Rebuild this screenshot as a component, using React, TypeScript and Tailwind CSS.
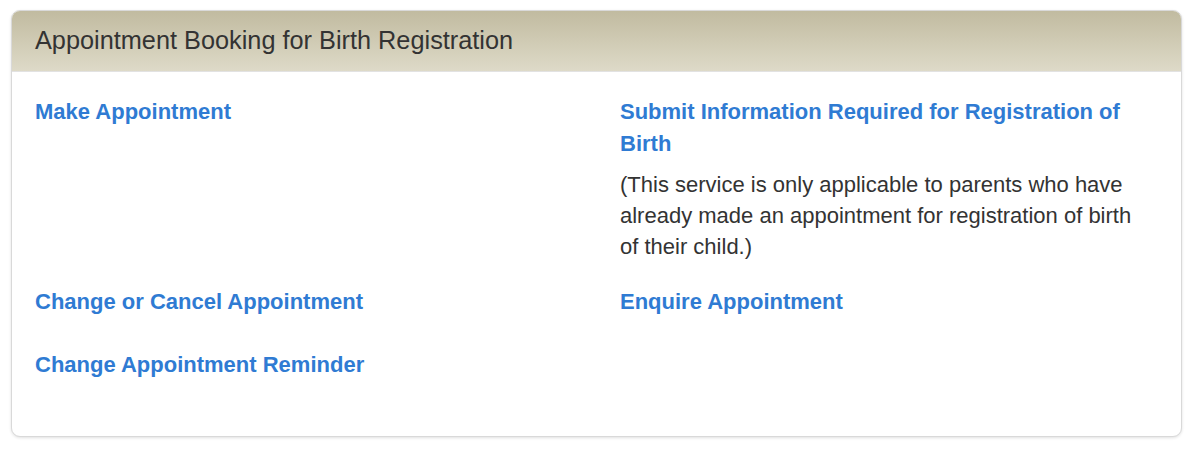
export default function App() {
  const link = "block text-[22px] leading-[32px] font-bold text-[#2f7bd3] hover:underline"

  return (
    <div className="min-h-screen bg-white pt-[10px] pl-[11px] font-['Liberation_Sans',Arial,sans-serif]">
      <div className="w-[1171px] h-[427px] rounded-[9px] border border-[#d9d9d9] bg-white shadow-[0_1px_3px_rgba(0,0,0,0.12)] overflow-hidden">
        <div className="h-[61px] flex items-center pl-[23px] bg-gradient-to-b from-[#c1bba0] to-[#dedac8] border-b border-[#e2e2e2]">
          <h2 className="text-[25.3px] text-[#333] leading-none">Appointment Booking for Birth Registration</h2>
        </div>

        <div className="pt-[24px] pl-[23px] grid grid-cols-[585px_528px]">
          <div className="mb-[24px]">
            <a href="#" className={link}>Make Appointment</a>
          </div>
          <div className="mb-[24px]">
            <a href="#" className={link}>Submit Information Required for Registration of Birth</a>
            <p className="mt-[9px] text-[22px] leading-[31px] text-[#333]">
              (This service is only applicable to parents who have already made an appointment for registration of birth of their child.)
            </p>
          </div>

          <div className="mb-[31px]">
            <a href="#" className={link}>Change or Cancel Appointment</a>
          </div>
          <div className="mb-[31px]">
            <a href="#" className={link}>Enquire Appointment</a>
          </div>

          <div>
            <a href="#" className={link}>Change Appointment Reminder</a>
          </div>
        </div>
      </div>
    </div>
  )
}
